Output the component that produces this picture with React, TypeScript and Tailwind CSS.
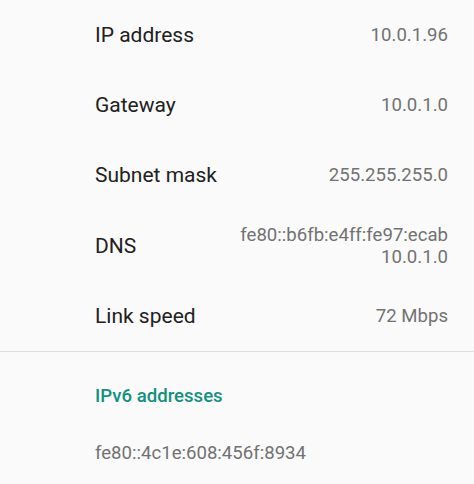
export default function App() {
  const rows: { label: string; value: string[] }[] = [
    { label: "IP address", value: ["10.0.1.96"] },
    { label: "Gateway", value: ["10.0.1.0"] },
    { label: "Subnet mask", value: ["255.255.255.0"] },
    { label: "DNS", value: ["fe80::b6fb:e4ff:fe97:ecab", "10.0.1.0"] },
    { label: "Link speed", value: ["72 Mbps"] },
  ];
  return (
    <div
      className="w-[474px] h-[484px] bg-[#fafafa] overflow-hidden"
      style={{ fontFamily: "Roboto, 'Noto Sans', sans-serif" }}
    >
      <div className="flex flex-col">
        {rows.map((r) => (
          <div key={r.label} className="h-[70.2px] flex items-center justify-between pl-[95px] pr-[26px]">
            <span className="text-[21px] text-[#212121] leading-[24px]">{r.label}</span>
            <div className="flex flex-col items-end text-[18.6px] text-[#727272] leading-[22px]">
              {r.value.map((v) => (
                <span key={v}>{v}</span>
              ))}
            </div>
          </div>
        ))}
      </div>
      <div className="h-px bg-[#dedede]" />
      <div className="pl-[95px] pt-[32px]">
        <div className="text-[18.6px] leading-[24px] font-medium text-[#11917f]">IPv6 addresses</div>
        <div className="mt-[33px] text-[18.6px] leading-[24px] text-[#727272]">fe80::4c1e:608:456f:8934</div>
      </div>
    </div>
  );
}
